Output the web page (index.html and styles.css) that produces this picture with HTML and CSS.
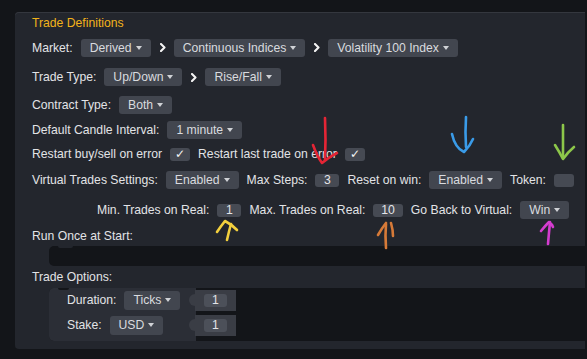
FILE: index.html
```html
<!DOCTYPE html>
<html lang="en">
<head>
    <meta charset="UTF-8">
    <meta name="viewport" content="width=device-width, initial-scale=1.0">
    <title>Trade Definitions</title>
    <link rel="stylesheet" href="styles.css">
</head>
<body>
    <div class="workspace">
        <div class="block">
            <div class="row r-title">Trade Definitions</div>

            <!-- Market -->
            <div class="row r-market">
                <span class="label">Market:</span>
                <span class="dropdown">Derived</span>
                <svg class="chevron" width="6" height="9" viewBox="0 0 6 9"><polyline points="1,1 4.5,4.5 1,8"/></svg>
                <span class="dropdown">Continuous Indices</span>
                <svg class="chevron" width="6" height="9" viewBox="0 0 6 9"><polyline points="1,1 4.5,4.5 1,8"/></svg>
                <span class="dropdown">Volatility 100 Index</span>
            </div>

            <!-- Trade type -->
            <div class="row r-type">
                <span class="label">Trade Type:</span>
                <span class="dropdown">Up/Down</span>
                <svg class="chevron" width="6" height="9" viewBox="0 0 6 9"><polyline points="1,1 4.5,4.5 1,8"/></svg>
                <span class="dropdown">Rise/Fall</span>
            </div>

            <div class="row r-contract">
                <span class="label">Contract Type:</span>
                <span class="dropdown">Both</span>
            </div>

            <div class="row r-candle">
                <span class="label">Default Candle Interval:</span>
                <span class="dropdown">1 minute</span>
            </div>

            <div class="row r-restart">
                <span class="label">Restart buy/sell on error</span>
                <span class="checkbox">&#10003;</span>
                <span class="label">Restart last trade on error</span>
                <span class="checkbox">&#10003;</span>
            </div>

            <!-- Virtual trades -->
            <div class="row r-virtual">
                <span class="label">Virtual Trades Settings:</span>
                <span class="dropdown">Enabled</span>
                <span class="label">Max Steps:</span>
                <span class="num">3</span>
                <span class="label">Reset on win:</span>
                <span class="dropdown">Enabled</span>
                <span class="label">Token:</span>
                <span class="num num-empty"></span>
            </div>

            <div class="row r-min">
                <span class="label">Min. Trades on Real:</span>
                <span class="num">1</span>
                <span class="label">Max. Trades on Real:</span>
                <span class="num">10</span>
                <span class="label">Go Back to Virtual:</span>
                <span class="dropdown">Win</span>
            </div>

            <div class="row r-run">
                <span class="label">Run Once at Start:</span>
            </div>
            <div class="slot slot-run"></div>

            <div class="row r-options">
                <span class="label">Trade Options:</span>
            </div>
            <div class="slot slot-options">
                <div class="nested">
                    <div class="nrow">
                        <div class="nfields">
                            <span class="label">Duration:</span>
                            <span class="dropdown">Ticks</span>
                        </div>
                        <span class="tab"></span>
                        <div class="value"><span class="value-field">1</span></div>
                    </div>
                    <div class="nrow">
                        <div class="nfields">
                            <span class="label">Stake:</span>
                            <span class="dropdown">USD</span>
                        </div>
                        <span class="tab"></span>
                        <div class="value"><span class="value-field">1</span></div>
                    </div>
                </div>
            </div>
        </div>

        <!-- hand drawn annotations -->
        <svg class="marks" width="587" height="359" viewBox="0 0 587 359">
            <g class="mark red">
                <path d="M325 118 Q326 140 325 160"/>
                <path d="M313 145 Q317 156 322 163 Q329 157 337 153"/>
            </g>
            <g class="mark blue">
                <path d="M466 117 Q465 132 466 147"/>
                <path d="M452 134 Q455 148 464 152 Q470 146 473 139"/>
            </g>
            <g class="mark green">
                <path d="M563 125 Q563 142 563 158"/>
                <path d="M555 145 Q560 153 563 159 Q568 152 574 147"/>
            </g>
            <g class="mark yellow">
                <path d="M227 240 Q229 231 231 224"/>
                <path d="M217 232 Q221 226 225 221 Q231 224 237 230"/>
            </g>
            <g class="mark orange">
                <path d="M386 248 Q385 235 386 224"/>
                <path d="M378 235 Q382 228 386 223"/>
                <path d="M391 223 Q393 230 393 236"/>
            </g>
            <g class="mark magenta">
                <path d="M548 244 Q549 232 550 222"/>
                <path d="M541 231 Q545 226 549 222 Q552 224 553 227"/>
            </g>
        </svg>
    </div>
</body>
</html>
```

FILE: styles.css
```css
/* Page */
body {
    margin: 0;
    background-color: #131519;
    font-family: "Liberation Sans", Arial, sans-serif;
    font-size: 12.2px;
    color: #dedfe2;
}

.workspace {
    position: relative;
    width: 587px;
    height: 359px;
    padding: 12px 0 0 15px;
    box-sizing: border-box;
    overflow: hidden;
}

/* Outer block */
.block {
    width: 570px;
    padding-bottom: 8px;
    background-color: #23262d;
    border-radius: 4px 0 0 4px;
    box-shadow: inset 0 1px 0 #34373e;
}

.row {
    display: flex;
    align-items: center;
    gap: 8px;
    padding-left: 17px;
    white-space: nowrap;
}

.r-title {
    height: 22px;
    color: #f2b31b;
}

.r-market { height: 27px; }
.r-type { height: 32px; }
.r-contract { height: 23px; }
.r-candle { height: 27px; }
.r-restart { height: 22px; }
.r-virtual { height: 30px; }
.r-min { height: 30px; padding-left: 82px; }
.r-run { height: 21px; }
.r-options { height: 22px; }

.label {
    color: #e2e3e6;
}

/* Fields */
.dropdown {
    display: inline-flex;
    align-items: center;
    gap: 4px;
    height: 18px;
    padding: 0 9px;
    background-color: #42464f;
    border-radius: 3px;
    color: #d9dbdf;
}

.dropdown::after {
    content: "";
    border-left: 3.5px solid transparent;
    border-right: 3.5px solid transparent;
    border-top: 4px solid #d0d2d6;
}

.chevron {
    margin-left: 1px;
    fill: none;
    stroke: #f4f4f4;
    stroke-width: 2.1;
    stroke-linecap: round;
    stroke-linejoin: round;
}

.num {
    display: inline-flex;
    align-items: center;
    justify-content: center;
    box-sizing: border-box;
    min-width: 24px;
    height: 13px;
    padding: 0 8px;
    background-color: #464a53;
    border-radius: 3px;
    color: #e4e5e8;
}

.num-empty {
    min-width: 20px;
    width: 20px;
    padding: 0;
}

.checkbox {
    display: inline-flex;
    align-items: center;
    justify-content: center;
    width: 20px;
    height: 13px;
    background-color: #464a53;
    border-radius: 3px;
    color: #f6f6f6;
    font-family: "DejaVu Sans", sans-serif;
    font-size: 12px;
}

/* Statement inputs */
.slot {
    position: relative;
    margin-left: 34px;
    background-color: #131519;
    border-radius: 5px 0 0 5px;
}

.slot::before {
    content: "";
    position: absolute;
    left: 9px;
    top: 0;
    width: 15px;
    height: 2px;
    background-color: #23262d;
    border-radius: 0 0 4px 4px;
}

.slot-run { height: 20px; }
.slot-options { height: 53px; }
.slot-options::before { display: none; }

/* Nested trade options block */
.nested {
    position: relative;
    display: flex;
    flex-direction: column;
    gap: 3px;
    height: 53px;
    box-sizing: border-box;
    padding: 1px 0 5px 18px;
    background: linear-gradient(to right, #2b2e36 147px, transparent 147px);
    border-radius: 5px 0 0 5px;
}

.nested::before {
    content: "";
    position: absolute;
    left: 9px;
    top: 0;
    width: 11px;
    height: 2px;
    background-color: #131519;
    border-radius: 0 0 4px 4px;
}

.nrow {
    display: flex;
    align-items: center;
    height: 22px;
}

.nfields {
    display: flex;
    align-items: center;
    gap: 8px;
    width: 121px;
    height: 100%;
}

.nfields .dropdown {
    height: 19px;
}

.tab {
    width: 6px;
    height: 12px;
    margin-left: 1px;
    background-color: #3a3d45;
    border-radius: 6px 0 0 6px;
}

.value {
    display: flex;
    align-items: center;
    width: 41px;
    height: 21px;
    box-sizing: border-box;
    padding-left: 9px;
    background-color: #3a3d45;
}

.value-field {
    display: inline-flex;
    align-items: center;
    justify-content: center;
    width: 23px;
    height: 13px;
    background-color: #4c5059;
    border-radius: 3px;
    color: #e4e5e8;
}

/* Annotations */
.marks {
    position: absolute;
    left: 0;
    top: 0;
    pointer-events: none;
}

.mark path {
    fill: none;
    stroke-width: 2.6;
    stroke-linecap: round;
    stroke-linejoin: round;
}

.red path { stroke: #e42535; }
.blue path { stroke: #3a9be8; }
.green path { stroke: #8dc74a; }
.yellow path { stroke: #f3d03e; }
.orange path { stroke: #d67a38; }
.magenta path { stroke: #d43ccf; }
```
